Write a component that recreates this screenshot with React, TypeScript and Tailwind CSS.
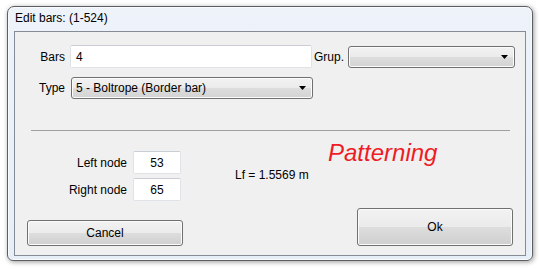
import React from "react";

const font = "font-['Liberation_Sans',Arial,sans-serif]";

function Arrow() {
  return (
    <svg width="7" height="4" viewBox="0 0 7 4" className="shrink-0">
      <path d="M0 0h7L3.5 4z" fill="#000" />
    </svg>
  );
}

function Select({ width, value }: { width: string; value?: string }) {
  return (
    <div
      className={`${width} h-[22px] flex items-center justify-between pl-[4px] pr-[6px] rounded-[3px] border border-[#707070] bg-[linear-gradient(to_bottom,#f2f2f2_0%,#ebebeb_50%,#dddddd_51%,#d3d3d3_100%)] shadow-[inset_0_0_0_1px_#fcfcfc] text-[12px] text-black`}
    >
      <span>{value}</span>
      <Arrow />
    </div>
  );
}

function TextBox({
  width,
  value,
  center,
}: {
  width: string;
  value: string;
  center?: boolean;
}) {
  return (
    <div
      className={`${width} h-[23px] flex items-center px-[5px] bg-white rounded-[2px] border border-[#dfe3e8] border-t-[#c9ced6] text-[12px] text-black ${
        center ? "justify-center" : ""
      }`}
    >
      {value}
    </div>
  );
}

function Button({ label, className }: { label: string; className: string }) {
  return (
    <div
      className={`${className} flex items-center justify-center rounded-[3px] border border-[#707070] bg-[linear-gradient(to_bottom,#f2f2f2_0%,#ebebeb_50%,#dddddd_51%,#cfcfcf_100%)] shadow-[inset_0_0_0_1px_#fcfcfc] text-[12px] text-black`}
    >
      {label}
    </div>
  );
}

export default function App() {
  return (
    <div className={`w-[539px] h-[269px] bg-white ${font}`}>
      <div className="pl-[7px] pt-[6px]">
        <div className="w-[526px] h-[255px] flex flex-col rounded-t-[7px] rounded-b-[6px] border border-[#5e5e5e] bg-[linear-gradient(to_bottom,#eef3fa_0%,#e6eef8_100%)] shadow-[1px_1px_5px_rgba(0,0,0,0.4),inset_0_0_0_1px_#f7faff]">
          <div className="h-[24px] pl-[7px] pt-[4px] text-[12px] text-black leading-[14px]">
            Edit bars: (1-524)
          </div>
          <div className="mx-[6px] w-[512px] h-[225px] border border-[#858c96] bg-[#f0f0f0] flex flex-col">
            {/* Bars row */}
            <div className="flex items-center mt-[13px]">
              <span className="w-[50px] text-right text-[12px]">Bars</span>
              <div className="ml-[5px]">
                <TextBox width="w-[242px]" value="4" />
              </div>
              <span className="ml-[2px] w-[31px] text-[12px]">Grup.</span>
              <div className="ml-[3px]">
                <Select width="w-[167px]" />
              </div>
            </div>
            {/* Type row */}
            <div className="flex items-center mt-[9px]">
              <span className="w-[50px] text-right text-[12px]">Type</span>
              <div className="ml-[6px]">
                <Select width="w-[242px]" value="5 - Boltrope (Border bar)" />
              </div>
            </div>
            <div className="ml-[16px] mt-[31px] w-[479px] h-px bg-[#a0a0a0]" />
            <div className="flex">
              <div className="w-[168px] flex flex-col">
                <div className="flex items-center mt-[20px]">
                  <span className="w-[112px] text-right text-[12px]">
                    Left node
                  </span>
                  <div className="ml-[6px]">
                    <TextBox width="w-[48px]" value="53" center />
                  </div>
                </div>
                <div className="flex items-center mt-[4px]">
                  <span className="w-[112px] text-right text-[12px]">
                    Right node
                  </span>
                  <div className="ml-[6px]">
                    <TextBox width="w-[48px]" value="65" center />
                  </div>
                </div>
                <Button label="Cancel" className="ml-[12px] mt-[19px] w-[156px] h-[26px]" />
              </div>
              <div className="ml-[52px] w-[93px] mt-[37px] text-[12px] leading-[14px]">
                Lf = 1.5569 m
              </div>
              <div className="flex flex-col">
                <div className="mt-[8px] text-[24px] leading-[28px] italic text-[#ee1c25]">
                  Patterning
                </div>
                <Button label="Ok" className="ml-[29px] mt-[41px] w-[156px] h-[38px]" />
              </div>
            </div>
          </div>
        </div>
      </div>
    </div>
  );
}
